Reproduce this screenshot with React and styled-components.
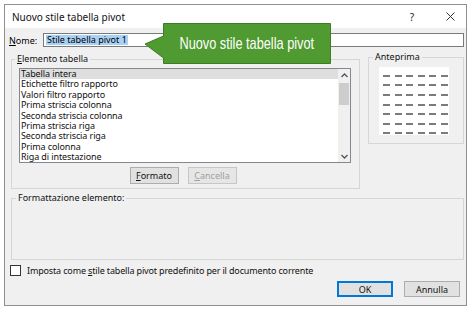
import React from "react";
import styled, { createGlobalStyle } from "styled-components";

const GlobalStyle = createGlobalStyle`
  html, body {
    margin: 0;
    padding: 0;
    background: #ffffff;
  }
  body {
    font-family: "Noto Sans", "Open Sans", sans-serif;
    font-size: 9px;
    color: #000;
  }
  #root {
    padding: 4px 0 0 4px;
  }
`;

const items = [
  "Tabella intera",
  "Etichette filtro rapporto",
  "Valori filtro rapporto",
  "Prima striscia colonna",
  "Seconda striscia colonna",
  "Prima striscia riga",
  "Seconda striscia riga",
  "Prima colonna",
  "Riga di intestazione",
];

function App() {
  return (
    <>
      <GlobalStyle />
      <Dialog>
        <TitleBar>
          <Title>Nuovo stile tabella pivot</Title>
          <TitleControls>
            <HelpMark>?</HelpMark>
            <CloseMark>
              <svg width="9" height="9" viewBox="0 0 9 9">
                <path d="M0.5 0.5 L8.5 8.5 M8.5 0.5 L0.5 8.5" stroke="#333" strokeWidth="1" fill="none" />
              </svg>
            </CloseMark>
          </TitleControls>
        </TitleBar>

        <Body>
          <NameRow>
            <NameLabel>
              <Key>N</Key>ome:
            </NameLabel>
            <NameInput>
              <Selected>Stile tabella pivot 1</Selected>
            </NameInput>
          </NameRow>

          <TopRow>
            <ElementGroup>
              <Legend>
                <Key>E</Key>lemento tabella
              </Legend>
              <ListBox>
                <ListRows>
                  {items.map((item, i) => (
                    <ListRow key={item} $active={i === 0}>
                      {item}
                    </ListRow>
                  ))}
                </ListRows>
                <ScrollBar>
                  <ScrollArrow>
                    <svg width="7" height="5" viewBox="0 0 7 5">
                      <path d="M0.5 4 L3.5 1 L6.5 4" stroke="#555" strokeWidth="1.3" fill="none" />
                    </svg>
                  </ScrollArrow>
                  <ScrollTrack>
                    <ScrollThumb />
                  </ScrollTrack>
                  <ScrollArrow>
                    <svg width="7" height="5" viewBox="0 0 7 5">
                      <path d="M0.5 1 L3.5 4 L6.5 1" stroke="#555" strokeWidth="1.3" fill="none" />
                    </svg>
                  </ScrollArrow>
                </ScrollBar>
              </ListBox>
              <GroupButtons>
                <SmallButton>
                  <Key>F</Key>ormato
                </SmallButton>
                <SmallButton $disabled>
                  <Key>C</Key>ancella
                </SmallButton>
              </GroupButtons>
            </ElementGroup>

            <PreviewGroup>
              <Legend>Anteprima</Legend>
              <PreviewBox>
                {Array.from({ length: 42 }).map((_, i) => (
                  <Dash key={i} />
                ))}
              </PreviewBox>
            </PreviewGroup>
          </TopRow>

          <FormatGroup>
            <Legend>Formattazione elemento:</Legend>
          </FormatGroup>

          <CheckRow>
            <CheckBox />
            <CheckText>
              Imposta come <Key>s</Key>tile tabella pivot predefinito per il documento corrente
            </CheckText>
          </CheckRow>

          <FooterButtons>
            <DialogButton $primary>OK</DialogButton>
            <DialogButton>Annulla</DialogButton>
          </FooterButtons>
        </Body>

        <Callout>
          <svg width="191" height="43" viewBox="0 0 191 43">
            <path
              d="M22.5 1.5 H189.5 V41.5 H22.5 V36 L4 22 L22.5 14 Z"
              fill="#4f9a31"
              stroke="#3d7d24"
              strokeWidth="1"
            />
          </svg>
          <CalloutText>
            <CalloutLabel>Nuovo stile tabella pivot</CalloutLabel>
          </CalloutText>
        </Callout>
      </Dialog>
    </>
  );
}

const Dialog = styled.div`
  position: relative;
  box-sizing: border-box;
  width: 463px;
  height: 302px;
  border: 1px solid #8f8f8f;
  background: #f0f0f0;
  display: flex;
  flex-direction: column;
`;

const TitleBar = styled.div`
  height: 23px;
  background: #ffffff;
  display: flex;
  align-items: center;
  justify-content: space-between;
  padding-left: 7px;
`;

const Title = styled.div`
  font-size: 10px;
  color: #111;
`;

const TitleControls = styled.div`
  display: flex;
  align-items: center;
`;

const HelpMark = styled.div`
  width: 20px;
  text-align: center;
  font-size: 10px;
  color: #222;
  margin-right: 18px;
`;

const CloseMark = styled.div`
  width: 20px;
  display: flex;
  justify-content: center;
  margin-right: 6px;
`;

const Body = styled.div`
  flex: 1;
  display: flex;
  flex-direction: column;
  padding: 5px 2px 0 4px;
`;

const Key = styled.u`
  text-underline-offset: 1px;
`;

const NameRow = styled.div`
  display: flex;
  align-items: center;
  height: 14px;
`;

const NameLabel = styled.div`
  width: 34px;
`;

const NameInput = styled.div`
  flex: 1;
  box-sizing: border-box;
  height: 14px;
  border: 1px solid #7a7a7a;
  background: #ffffff;
  display: flex;
  align-items: center;
  padding-left: 2px;
`;

const Selected = styled.span`
  background: #a9d1f5;
  line-height: 10px;
  padding: 0 1px;
`;

const TopRow = styled.div`
  display: flex;
  align-items: flex-start;
  margin-top: 6px;
`;

const Group = styled.fieldset`
  box-sizing: border-box;
  margin: 0;
  min-width: 0;
  border: 1px solid #d6d6d6;
`;

const Legend = styled.legend`
  padding: 0 2px;
  line-height: 12px;
  font-size: 9px;
  color: #111;
`;

const ElementGroup = styled(Group)`
  width: 349px;
  height: 136px;
  margin-left: 2px;
  padding: 3px 8px 0 3px;
  display: flex;
  flex-direction: column;
`;

const ListBox = styled.div`
  box-sizing: border-box;
  margin-left: 4px;
  height: 95px;
  border: 1px solid #828790;
  background: #ffffff;
  display: flex;
`;

const ListRows = styled.div`
  flex: 1;
`;

const ListRow = styled.div`
  height: 10.4px;
  line-height: 10.4px;
  padding-left: 1px;
  white-space: nowrap;
  background: ${(p) => (p.$active ? "#dedede" : "transparent")};
  color: #111;
  letter-spacing: -0.1px;
`;

const ScrollBar = styled.div`
  width: 12px;
  background: #f0f0f0;
  display: flex;
  flex-direction: column;
  align-items: center;
`;

const ScrollArrow = styled.div`
  height: 12px;
  display: flex;
  align-items: center;
  justify-content: center;
`;

const ScrollTrack = styled.div`
  flex: 1;
  width: 100%;
  display: flex;
  justify-content: center;
`;

const ScrollThumb = styled.div`
  width: 10px;
  height: 22px;
  margin-top: 2px;
  background: #cdcdcd;
`;

const GroupButtons = styled.div`
  display: flex;
  justify-content: center;
  gap: 9px;
  margin-top: 4px;
`;

const SmallButton = styled.div`
  box-sizing: border-box;
  width: 49px;
  height: 17px;
  display: flex;
  align-items: center;
  justify-content: center;
  background: ${(p) => (p.$disabled ? "#e6e6e6" : "#e1e1e1")};
  border: 1px solid ${(p) => (p.$disabled ? "#c6c6c6" : "#adadad")};
  color: ${(p) => (p.$disabled ? "#a0a0a0" : "#111")};
`;

const PreviewGroup = styled(Group)`
  width: 96px;
  height: 93px;
  margin: -2px 0 0 8px;
  padding: 4px 0 0 4px;
`;

const PreviewBox = styled.div`
  width: 70px;
  height: 68px;
  margin-left: 6px;
  box-sizing: border-box;
  background: #ffffff;
  padding: 4px 3px 0 4px;
  display: grid;
  grid-template-columns: repeat(6, 7px);
  grid-auto-rows: 9.6px;
  column-gap: 4.6px;
  align-items: center;
`;

const Dash = styled.div`
  width: 7px;
  height: 2px;
  background: #7b7b7b;
`;

const FormatGroup = styled(Group)`
  width: 453px;
  height: 68px;
  margin: 3px 0 0 2px;
  padding: 0 0 0 4px;
`;

const CheckRow = styled.div`
  display: flex;
  align-items: center;
  gap: 6px;
  margin: 5px 0 0 1px;
  height: 11px;
  color: #111;
`;

const CheckText = styled.span`
  letter-spacing: -0.15px;
`;

const CheckBox = styled.div`
  box-sizing: border-box;
  width: 11px;
  height: 11px;
  border: 1px solid #333;
  background: #ffffff;
`;

const FooterButtons = styled.div`
  display: flex;
  justify-content: flex-end;
  gap: 11px;
  margin-top: 5px;
  padding-right: 4px;
`;

const DialogButton = styled.div`
  box-sizing: border-box;
  width: 56px;
  height: 16px;
  display: flex;
  align-items: center;
  justify-content: center;
  background: #e1e1e1;
  border: ${(p) => (p.$primary ? "2px solid #0078d7" : "1px solid #adadad")};
  color: #111;
`;

const Callout = styled.div`
  position: absolute;
  left: 136px;
  top: 17px;
  width: 191px;
  height: 43px;
`;

const CalloutText = styled.div`
  position: absolute;
  left: 22px;
  top: 1px;
  width: 168px;
  height: 41px;
  display: flex;
  align-items: center;
  justify-content: center;
  color: #ffffff;
  font-family: "Liberation Sans", "Noto Sans", sans-serif;
  font-size: 17px;
`;

const CalloutLabel = styled.span`
  display: inline-block;
  white-space: nowrap;
  transform: scaleX(0.75);
`;

export default App;
